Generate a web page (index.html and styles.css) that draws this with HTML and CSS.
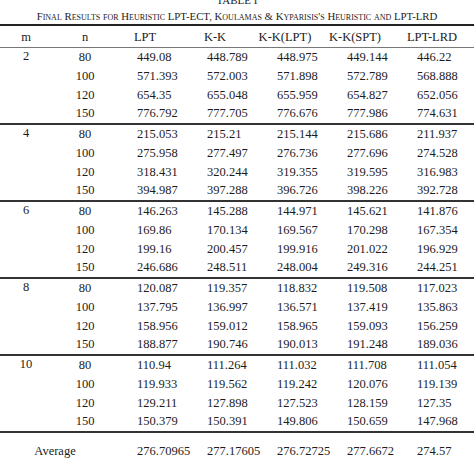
FILE: index.html
```html
<!DOCTYPE html>
<html>
<head>
<meta charset="utf-8">
<link rel="stylesheet" href="styles.css">
</head>
<body>
<div class="page">
  <div class="title">Table I</div>
  <div class="subtitle">Final Results for Heuristic LPT-ECT, Koulamas &amp; Kyparisis's Heuristic and LPT-LRD</div>
  <table class="results">
    <colgroup>
      <col class="c-m"><col class="c-n"><col class="c-v"><col class="c-v"><col class="c-v"><col class="c-v"><col class="c-last">
    </colgroup>
    <thead>
      <tr><th class="m">m</th><th class="n">n</th><th>LPT</th><th>K-K</th><th>K-K(LPT)</th><th>K-K(SPT)</th><th>LPT-LRD</th></tr>
    </thead>
    <tbody>
      <tr><td class="m" rowspan="4">2</td><td class="n">80</td><td>449.08</td><td>448.789</td><td>448.975</td><td>449.144</td><td>446.22</td></tr>
      <tr><td class="n">100</td><td>571.393</td><td>572.003</td><td>571.898</td><td>572.789</td><td>568.888</td></tr>
      <tr><td class="n">120</td><td>654.35</td><td>655.048</td><td>655.959</td><td>654.827</td><td>652.056</td></tr>
      <tr><td class="n">150</td><td>776.792</td><td>777.705</td><td>776.676</td><td>777.986</td><td>774.631</td></tr>
    </tbody>
    <tbody>
      <tr><td class="m" rowspan="4">4</td><td class="n">80</td><td>215.053</td><td>215.21</td><td>215.144</td><td>215.686</td><td>211.937</td></tr>
      <tr><td class="n">100</td><td>275.958</td><td>277.497</td><td>276.736</td><td>277.696</td><td>274.528</td></tr>
      <tr><td class="n">120</td><td>318.431</td><td>320.244</td><td>319.355</td><td>319.595</td><td>316.983</td></tr>
      <tr><td class="n">150</td><td>394.987</td><td>397.288</td><td>396.726</td><td>398.226</td><td>392.728</td></tr>
    </tbody>
    <tbody>
      <tr><td class="m" rowspan="4">6</td><td class="n">80</td><td>146.263</td><td>145.288</td><td>144.971</td><td>145.621</td><td>141.876</td></tr>
      <tr><td class="n">100</td><td>169.86</td><td>170.134</td><td>169.567</td><td>170.298</td><td>167.354</td></tr>
      <tr><td class="n">120</td><td>199.16</td><td>200.457</td><td>199.916</td><td>201.022</td><td>196.929</td></tr>
      <tr><td class="n">150</td><td>246.686</td><td>248.511</td><td>248.004</td><td>249.316</td><td>244.251</td></tr>
    </tbody>
    <tbody>
      <tr><td class="m" rowspan="4">8</td><td class="n">80</td><td>120.087</td><td>119.357</td><td>118.832</td><td>119.508</td><td>117.023</td></tr>
      <tr><td class="n">100</td><td>137.795</td><td>136.997</td><td>136.571</td><td>137.419</td><td>135.863</td></tr>
      <tr><td class="n">120</td><td>158.956</td><td>159.012</td><td>158.965</td><td>159.093</td><td>156.259</td></tr>
      <tr><td class="n">150</td><td>188.877</td><td>190.746</td><td>190.013</td><td>191.248</td><td>189.036</td></tr>
    </tbody>
    <tbody>
      <tr><td class="m" rowspan="4">10</td><td class="n">80</td><td>110.94</td><td>111.264</td><td>111.032</td><td>111.708</td><td>111.054</td></tr>
      <tr><td class="n">100</td><td>119.933</td><td>119.562</td><td>119.242</td><td>120.076</td><td>119.139</td></tr>
      <tr><td class="n">120</td><td>129.211</td><td>127.898</td><td>127.523</td><td>128.159</td><td>127.35</td></tr>
      <tr><td class="n">150</td><td>150.379</td><td>150.391</td><td>149.806</td><td>150.659</td><td>147.968</td></tr>
    </tbody>
    <tfoot>
      <tr><td class="avg" colspan="2">Average</td><td>276.70965</td><td>277.17605</td><td>276.72725</td><td>277.6672</td><td>274.57</td></tr>
    </tfoot>
  </table>
</div>
</body>
</html>
```

FILE: styles.css
```css
html, body {
  margin: 0;
  padding: 0;
  background: #ffffff;
}
body {
  font-family: "Liberation Serif", "Times New Roman", serif;
  color: #1c1c1c;
  font-size: 12.5px;
}
.page {
  width: 474px;
  height: 459px;
  overflow: hidden;
}
.title {
  text-transform: uppercase;
  text-align: center;
  font-size: 11px;
  line-height: 11px;
  height: 11px;
  margin-top: -5px;
}
.subtitle {
  font-variant: small-caps;
  text-align: center;
  font-size: 10.8px;
  line-height: 14px;
  height: 14px;
  margin-top: 3px;
  margin-bottom: 1px;
}
.results {
  width: 474px;
  border-collapse: collapse;
  table-layout: fixed;
  border-top: 2px solid #222;
}
.c-m { width: 52px; }
.c-n { width: 58px; }
.c-v { width: 70px; }
.c-last { width: 84px; }
.results th {
  font-weight: normal;
  text-align: center;
  height: 20px;
  padding: 1px 0 0 0;
  line-height: 19px;
  border-bottom: 1px solid #777;
}
.results td {
  padding: 0 0 0 27px;
  text-align: left;
  height: 18.75px;
  line-height: 18.75px;
  white-space: nowrap;
}
.results th.m, .results td.m {
  text-align: center;
  padding-left: 0;
}
.results td.m {
  vertical-align: top;
  line-height: 16px;
}
.results th.n, .results td.n {
  text-align: center;
  padding-left: 8px;
}
.results tbody {
  border-bottom: 2px solid #333;
}
.results tfoot td {
  height: 14px;
  line-height: 16px;
  padding-top: 10px;
  border-bottom: 4px solid #9a9a9a;
}
.results tfoot td.avg {
  text-align: center;
  padding-left: 0;
}
```
